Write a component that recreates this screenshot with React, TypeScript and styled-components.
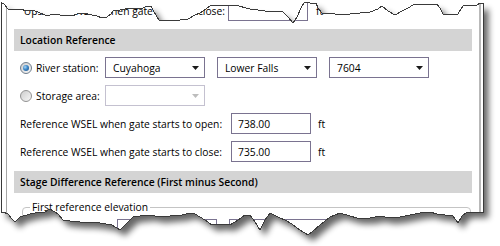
import React from "react";
import styled, { createGlobalStyle } from "styled-components";

const FONT = `"Open Sans", "Noto Sans", "DejaVu Sans", sans-serif`;

const GlobalStyle = createGlobalStyle`
  html, body { margin: 0; padding: 0; background: #fff; }
`;

const Stage = styled.div`
  position: relative;
  width: 500px;
  height: 246px;
  overflow: hidden;
  background: #fff;
  font-family: ${FONT};
  font-size: 10.3px;
  color: #000;
`;

const Window = styled.div`
  box-sizing: border-box;
  width: 475px;
  height: 246px;
  margin-left: 6px;
  border-left: 1px solid #a6a6a6;
  border-right: 2px solid #b9b9b9;
  padding: 0 7px;
  display: flex;
  flex-direction: column;
`;

const Row = styled.div<{ $mt?: number; $indent?: number }>`
  display: flex;
  align-items: center;
  height: 21px;
  flex: none;
  margin-top: ${(p) => p.$mt ?? 0}px;
  padding-left: ${(p) => p.$indent ?? 6}px;
`;

const Label = styled.span<{ $w: number; $right?: boolean }>`
  box-sizing: border-box;
  width: ${(p) => p.$w}px;
  flex: none;
  white-space: nowrap;
  overflow: hidden;
  text-align: ${(p) => (p.$right ? "right" : "left")};
  padding-right: ${(p) => (p.$right ? 3 : 0)}px;
`;

const Band = styled.div<{ $mt: number }>`
  flex: none;
  height: 22px;
  margin-top: ${(p) => p.$mt}px;
  background: #d4d4d4;
  display: flex;
  align-items: center;
  padding-left: 6px;
  font-weight: 600;
`;

const RadioOuter = styled.span<{ $checked?: boolean }>`
  box-sizing: border-box;
  width: 12px;
  height: 12px;
  flex: none;
  border-radius: 50%;
  border: 1px solid ${(p) => (p.$checked ? "#6f7d8c" : "#929292")};
  background: linear-gradient(135deg, #cdcdcd, #f7f7f7);
  display: flex;
  align-items: center;
  justify-content: center;
  margin-right: 4px;
`;

const RadioDot = styled.span`
  width: 6px;
  height: 6px;
  border-radius: 50%;
  background: radial-gradient(circle at 35% 35%, #a6d6f7 0, #3c86c6 45%, #1b4c82 100%);
`;

const Combo = styled.div<{ $disabled?: boolean; $ml?: number }>`
  box-sizing: border-box;
  width: 100px;
  height: 21px;
  flex: none;
  margin-left: ${(p) => p.$ml ?? 0}px;
  border: 1px solid ${(p) => (p.$disabled ? "#c4c1d0" : "#7a7390")};
  background: #fff;
  display: flex;
  align-items: center;
  justify-content: space-between;
  padding: 0 5px 0 7px;
  white-space: nowrap;
`;

const Field = styled.div`
  box-sizing: border-box;
  width: 80px;
  height: 21px;
  flex: none;
  border: 1px solid #7a7390;
  background: #fff;
  display: flex;
  align-items: center;
  padding-left: 6px;
`;

const Unit = styled.span<{ $ml: number }>`
  margin-left: ${(p) => p.$ml}px;
`;

const Group = styled.fieldset`
  flex: none;
  margin: 7px 1px 0 8px;
  padding: 0 7px;
  border: 1px solid #c4c4c4;
  border-radius: 4px;
  min-width: 0;
  height: 80px;
`;

const Legend = styled.legend`
  padding: 0 2px;
  line-height: 14px;
`;

const Overlay = styled.svg`
  position: absolute;
  left: 0;
  top: 0;
  width: 500px;
  height: 246px;
  pointer-events: none;
`;

const Arrow = ({ disabled }: { disabled?: boolean }) => (
  <svg width="7" height="4" viewBox="0 0 7 4">
    <path d="M0,0 H7 L3.5,4 Z" fill={disabled ? "#bdbdbd" : "#1a1a1a"} />
  </svg>
);

const Radio = ({ checked }: { checked?: boolean }) => (
  <RadioOuter $checked={checked}>{checked && <RadioDot />}</RadioOuter>
);

type P = [number, number];
const topEdge: P[] = [
  [1.5, 3], [4, 4], [8, 9], [14, 10], [20, 9], [27, 11], [33, 10], [40, 13], [45, 15], [50, 15],
  [55, 14], [60, 15], [67, 15], [72, 16], [77, 14], [82, 13], [88, 14], [92, 15], [97, 16],
  [102, 18], [107, 17], [111, 14], [114, 10], [120, 10], [130, 8], [140, 9], [148, 6], [151, 6],
  [154, 12], [159, 20], [170, 21], [180, 20], [188, 19], [195, 15], [200, 13], [206, 9], [211, 5],
  [220, 6], [235, 5], [250, 9], [265, 11], [283, 12], [288, 17], [293, 23], [297, 17], [302, 6],
  [305, 2], [310, 3], [316, 3], [318, 8], [322, 13], [330, 13], [340, 15], [350, 14], [360, 13],
  [370, 12], [378, 9], [382, 6], [388, 11], [395, 15], [402, 11], [408, 8], [413, 5], [420, 4],
  [430, 5], [437, 4], [440, 8], [443, 14], [450, 14], [458, 14], [461, 9], [464, 5], [470, 5],
  [476, 6], [480, 3], [483.5, 3],
];
const bottomEdge: P[] = [
  [483.5, 212], [476, 212], [467, 212], [462, 216], [458, 223], [453, 216], [445, 215], [437, 214],
  [430, 212], [420, 213], [410, 215], [400, 217], [390, 218], [380, 216], [370, 218], [357, 218],
  [350, 216], [340, 213], [330, 217], [320, 225], [312, 232], [308, 235], [300, 230], [292, 224],
  [285, 220], [280, 218], [270, 213], [265, 220], [260, 230], [255, 222], [250, 215], [245, 215],
  [238, 220], [230, 225], [222, 224], [212, 225], [205, 220], [195, 214], [190, 213], [182, 215],
  [170, 216], [160, 217], [150, 215], [140, 216], [133, 217], [128, 222], [120, 230], [112, 225],
  [100, 223], [90, 222], [80, 222], [70, 221], [63, 220], [58, 214], [50, 209], [45, 212],
  [40, 212], [30, 214], [20, 217], [15, 222], [12, 219], [8, 214], [3, 212], [1.5, 212],
];
const paperD =
  "M" + [...topEdge, ...bottomEdge].map(([x, y]) => `${x},${y}`).join(" L") + " Z";
const outsideD = `M0,0 H500 V246 H0 Z ${paperD}`;

const TornEdges = () => (
  <Overlay viewBox="0 0 500 246">
    <defs>
      <clipPath id="outside">
        <path d={outsideD} clipRule="evenodd" />
      </clipPath>
      <filter id="blur" x="-20%" y="-20%" width="140%" height="140%">
        <feGaussianBlur stdDeviation="3" />
      </filter>
    </defs>
    <path d={outsideD} fill="#fff" fillRule="evenodd" />
    <g clipPath="url(#outside)">
      <path d={paperD} transform="translate(5,6)" fill="#000" opacity="0.6" filter="url(#blur)" />
    </g>
    <path d={paperD} fill="none" stroke="#3a3a3a" strokeWidth="1" shapeRendering="crispEdges" />
  </Overlay>
);

export default function App() {
  return (
    <>
      <GlobalStyle />
      <Stage>
        <Window>
          <Row>
            <Label $w={208} $right>Upstream WSEL when gate starts to close:</Label>
            <Field />
            <Unit $ml={8}>ft</Unit>
          </Row>
          <Band $mt={8}>Location Reference</Band>
          <Row $mt={6}>
            <Radio checked />
            <Label $w={69}>River station:</Label>
            <Combo>
              Cuyahoga
              <Arrow />
            </Combo>
            <Combo $ml={12}>
              Lower Falls
              <Arrow />
            </Combo>
            <Combo $ml={12}>
              7604
              <Arrow />
            </Combo>
          </Row>
          <Row $mt={7}>
            <Radio />
            <Label $w={69}>Storage area:</Label>
            <Combo $disabled>
              <span />
              <Arrow disabled />
            </Combo>
          </Row>
          <Row $mt={7}>
            <Label $w={211}>Reference WSEL when gate starts to open:</Label>
            <Field>738.00</Field>
            <Unit $ml={7}>ft</Unit>
          </Row>
          <Row $mt={7}>
            <Label $w={211}>Reference WSEL when gate starts to close:</Label>
            <Field>735.00</Field>
            <Unit $ml={7}>ft</Unit>
          </Row>
          <Band $mt={9}>Stage Difference Reference (First minus Second)</Band>
          <Group>
            <Legend>First reference elevation</Legend>
            <Row $mt={5} $indent={2}>
              <Radio checked />
              <Label $w={69}>River station:</Label>
              <Combo>
                Cuyahoga
                <Arrow />
              </Combo>
              <Combo $ml={12}>
                Lower Falls
                <Arrow />
              </Combo>
              <Combo $ml={12}>
                7604
                <Arrow />
              </Combo>
            </Row>
          </Group>
        </Window>
        <TornEdges />
      </Stage>
    </>
  );
}
